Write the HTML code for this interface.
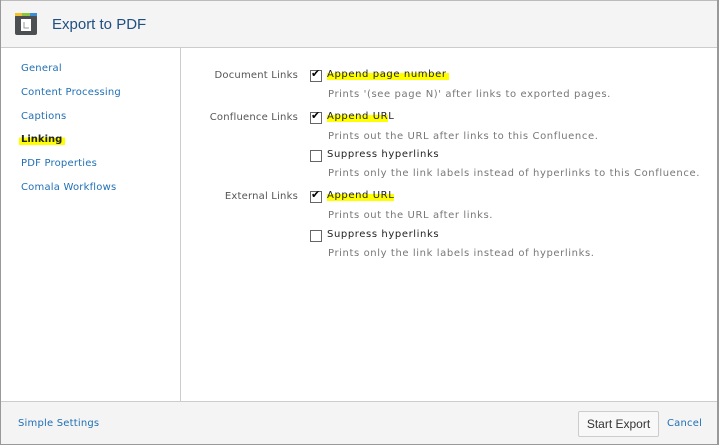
<!DOCTYPE html>
<html><head><style>
body{margin:0;width:719px;height:445px;overflow:hidden;background:#fff;font-family:"DejaVu Sans",Verdana,sans-serif;font-size:10px;position:relative}
.a{position:absolute;white-space:nowrap}
.hd{position:absolute;left:1px;top:0;width:716px;height:46px;background:#f4f4f4;border-bottom:1px solid #ccc;border-top:1px solid #bbb}
.ft{position:absolute;left:1px;top:401px;width:716px;height:42px;background:#f4f4f4;border-top:1px solid #ccc;border-bottom:1px solid #999}
.nav{color:#1f6fb5;letter-spacing:0.2px}
.lbl{color:#555;text-align:right;width:110px;left:188px;letter-spacing:0.2px}
.cb{position:absolute;width:10px;height:10px;border:1px solid #666;background:#fff}
.c{letter-spacing:0.6px}
.hl{background:linear-gradient(to bottom,transparent 35%,#ff0 35%)}
.desc{color:#777;letter-spacing:0.6px}
</style></head><body>
<div style="position:absolute;left:0;top:0;width:1px;height:445px;background:#999"></div>
<div style="position:absolute;left:717px;top:0;width:2px;height:445px;background:#999"></div>
<div class="hd"></div>
<svg class="a" style="left:15px;top:13px" width="23" height="23"><rect x="0" y="2" width="22" height="20" rx="2" fill="#4b4f52"/><rect x="0" y="0" width="7" height="3" fill="#f2c12e"/><rect x="7" y="0" width="8" height="3" fill="#8cc63f"/><rect x="15" y="0" width="7" height="3" fill="#3a8fd6"/><rect x="6" y="6" width="10" height="12" fill="#fff"/><path d="M9 9v6h5" stroke="#999" fill="none"/></svg>
<div class="a" style="left:52px;top:16px;font-family:'Liberation Sans',sans-serif;font-size:15px;color:#205081">Export to PDF</div>
<div style="position:absolute;left:180px;top:47px;width:1px;height:354px;background:#ccc"></div>
<div class="a nav" style="left:21px;top:63px">General</div>
<div class="a nav" style="left:21px;top:87px">Content Processing</div>
<div class="a nav" style="left:21px;top:111px">Captions</div>
<div class="a" style="left:19px;top:134px;color:#222;font-weight:bold;background:linear-gradient(to bottom,transparent 30%,#ff0 30%);padding:0 3px 0 2px">Linking</div>
<div class="a nav" style="left:21px;top:158px">PDF Properties</div>
<div class="a nav" style="left:21px;top:182px">Comala Workflows</div>

<div class="a lbl" style="top:70px">Document Links</div>
<div class="cb" style="left:310px;top:70px"></div><div class="a" style="left:311px;top:67px;font-size:11px">✔</div>
<div class="a hl c" style="left:327px;top:69px;color:#222;padding-right:2px">Append page number</div>
<div class="a desc" style="left:328px;top:89px">Prints '(see page N)' after links to exported pages.</div>

<div class="a lbl" style="top:112px">Confluence Links</div>
<div class="cb" style="left:310px;top:112px"></div><div class="a" style="left:311px;top:109px;font-size:11px">✔</div>
<div class="a c" style="left:327px;top:111px;color:#222"><span class="hl">Append UR</span>L</div>
<div class="a desc" style="left:328px;top:131px">Prints out the URL after links to this Confluence.</div>
<div class="cb" style="left:310px;top:150px"></div>
<div class="a c" style="left:327px;top:149px;color:#222">Suppress hyperlinks</div>
<div class="a desc" style="left:328px;top:168px">Prints only the link labels instead of hyperlinks to this Confluence.</div>

<div class="a lbl" style="top:191px">External Links</div>
<div class="cb" style="left:310px;top:191px"></div><div class="a" style="left:311px;top:188px;font-size:11px">✔</div>
<div class="a hl c" style="left:327px;top:190px;color:#222">Append URL</div>
<div class="a desc" style="left:328px;top:210px">Prints out the URL after links.</div>
<div class="cb" style="left:310px;top:230px"></div>
<div class="a c" style="left:327px;top:229px;color:#222">Suppress hyperlinks</div>
<div class="a desc" style="left:328px;top:248px">Prints only the link labels instead of hyperlinks.</div>

<div class="ft"></div>
<div class="a nav" style="left:18px;top:418px">Simple Settings</div>
<div class="a" style="left:578px;top:411px;width:79px;height:24px;border:1px solid #ccc;border-radius:2px;background:#f8f8f8;font-family:'Liberation Sans',sans-serif;font-size:12px;color:#333;text-align:center;line-height:24px">Start Export</div>
<div class="a nav" style="left:667px;top:418px">Cancel</div>
</body></html>
